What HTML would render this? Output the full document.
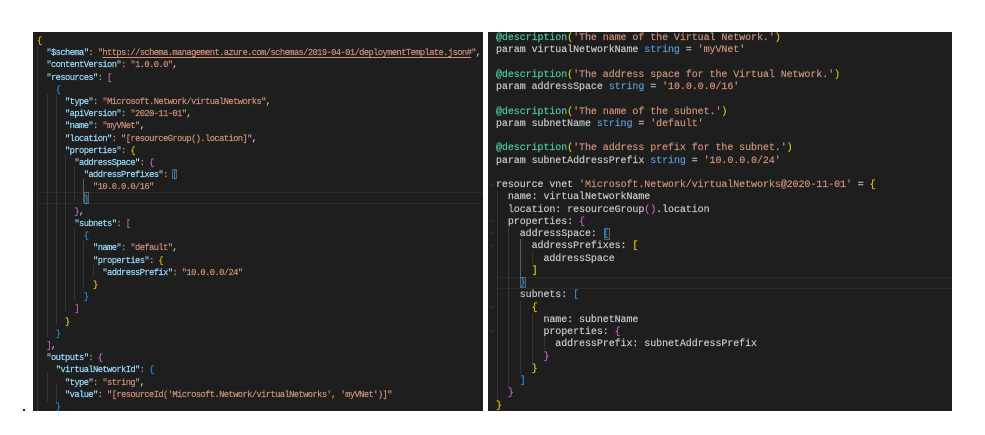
<!DOCTYPE html>
<html>
<head>
<meta charset="utf-8">
<style>
html,body{margin:0;padding:0;background:#fff;width:985px;height:435px;overflow:hidden}
.panel{position:absolute;top:32px;height:379px;background:#1e1e1e;overflow:hidden}
#l{left:33px;width:450px}
#r{left:488px;width:464px}
.code{position:absolute;margin:0;white-space:pre;font-family:"Liberation Mono",monospace;color:#c8c8c8;filter:blur(.35px);-webkit-text-stroke:.18px currentColor}
#l .code{left:4px;top:3px;font-size:8.8px;letter-spacing:-.61px;line-height:12.2px;color:#ce9178}
#r .code{left:8px;top:1px;font-size:10px;letter-spacing:-.07px;line-height:12.25px}
i{font-style:normal}
.k{color:#9cdcfe}.s{color:#ce9178}.p{color:#c8c8c8}
.g{color:#e6c200}.m{color:#d05fc8}.b{color:#1f8fe0}
.t{color:#4ec9a0}.w{color:#569cd6}
.u{text-decoration:underline;text-decoration-color:#ce9178;text-underline-offset:1.5px}
.v{position:absolute;width:1px;background:#343434}
.vb{background:#5c5c5c}
.h{position:absolute;right:0;height:10px;border-top:1px solid #2a2a2a;border-bottom:1px solid #2a2a2a}
.box{position:absolute;border:1px solid #606060;background:rgba(30,70,90,.3)}
.dot{position:absolute;left:23px;top:409px;width:2px;height:2px;background:#222}
.f{position:absolute;left:2px;width:3px;height:3px;border-left:1px solid #2e2e2e;border-bottom:1px solid #2e2e2e;transform:rotate(-45deg)}
</style>
</head>
<body>
<div class="dot"></div>

<div id="l" class="panel">
  <div class="h" style="top:160px;left:4px"></div>
  <div class="v" style="left:4px;top:14px;height:365px"></div>
  <div class="v" style="left:14px;top:62px;height:243px"></div>
  <div class="v" style="left:14px;top:340px;height:30px"></div>
  <div class="v" style="left:23px;top:62px;height:231px"></div>
  <div class="v" style="left:23px;top:352px;height:20px"></div>
  <div class="v" style="left:32px;top:122px;height:157px"></div>
  <div class="v" style="left:41px;top:134px;height:35px"></div>
  <div class="v" style="left:41px;top:196px;height:72px"></div>
  <div class="v vb" style="left:50px;top:147px;height:24px"></div>
  <div class="v" style="left:50px;top:208px;height:48px"></div>
  <div class="v" style="left:60px;top:232px;height:12px"></div>
  <div class="box" style="left:51px;top:160px;width:3px;height:10px"></div>
  <div class="box" style="left:139px;top:137px;width:3px;height:8px"></div>
<pre class="code"><i class="g">{</i>
  <i class="k">"$schema"</i>: "<span class="u">https://schema.management.azure.com/schemas/2019-04-01/deploymentTemplate.json#</span>"<i class="p">,</i>
  <i class="k">"contentVersion"</i>: "1.0.0.0"<i class="p">,</i>
  <i class="k">"resources"</i>: <i class="m">[</i>
    <i class="b">{</i>
      <i class="k">"type"</i>: "Microsoft.Network/virtualNetworks"<i class="p">,</i>
      <i class="k">"apiVersion"</i>: "2020-11-01"<i class="p">,</i>
      <i class="k">"name"</i>: "myVNet"<i class="p">,</i>
      <i class="k">"location"</i>: "[resourceGroup().location]"<i class="p">,</i>
      <i class="k">"properties"</i>: <i class="g">{</i>
        <i class="k">"addressSpace"</i>: <i class="m">{</i>
          <i class="k">"addressPrefixes"</i>: <i class="b">[</i>
            "10.0.0.0/16"
          <i class="b">]</i>
        <i class="m">}</i><i class="p">,</i>
        <i class="k">"subnets"</i>: <i class="m">[</i>
          <i class="b">{</i>
            <i class="k">"name"</i>: "default"<i class="p">,</i>
            <i class="k">"properties"</i>: <i class="g">{</i>
              <i class="k">"addressPrefix"</i>: "10.0.0.0/24"
            <i class="g">}</i>
          <i class="b">}</i>
        <i class="m">]</i>
      <i class="g">}</i>
    <i class="b">}</i>
  <i class="m">]</i><i class="p">,</i>
  <i class="k">"outputs"</i>: <i class="m">{</i>
    <i class="k">"virtualNetworkId"</i>: <i class="b">{</i>
      <i class="k">"type"</i>: "string"<i class="p">,</i>
      <i class="k">"value"</i>: "[resourceId('Microsoft.Network/virtualNetworks', 'myVNet')]"
    <i class="b">}</i></pre>
</div>

<div id="r" class="panel">
  <div class="h" style="top:245px;left:9px"></div>
  <div class="v" style="left:9px;top:159px;height:208px"></div>
  <div class="v" style="left:20px;top:195px;height:160px"></div>
  <div class="v vb" style="left:32px;top:207px;height:49px"></div>
  <div class="v" style="left:32px;top:269px;height:74px"></div>
  <div class="v" style="left:44px;top:220px;height:12px"></div>
  <div class="v" style="left:44px;top:281px;height:50px"></div>
  <div class="v" style="left:56px;top:305px;height:13px"></div>
  <div class="box" style="left:32px;top:245px;width:4px;height:9px"></div>
  <div class="box" style="left:116px;top:196px;width:4px;height:10px"></div>
  <div class="f" style="top:150px"></div>
  <div class="f" style="top:186px"></div>
  <div class="f" style="top:198px"></div>
  <div class="f" style="top:211px"></div>
  <div class="f" style="top:272px"></div>
  <div class="f" style="top:296px"></div>
<pre class="code"><i class="t">@description</i><i class="g">(</i><i class="s">'The name of the Virtual Network.'</i><i class="g">)</i>
param virtualNetworkName <i class="w">string</i> = <i class="s">'myVNet'</i>

<i class="t">@description</i><i class="g">(</i><i class="s">'The address space for the Virtual Network.'</i><i class="g">)</i>
param addressSpace <i class="w">string</i> = <i class="s">'10.0.0.0/16'</i>

<i class="t">@description</i><i class="g">(</i><i class="s">'The name of the subnet.'</i><i class="g">)</i>
param subnetName <i class="w">string</i> = <i class="s">'default'</i>

<i class="t">@description</i><i class="g">(</i><i class="s">'The address prefix for the subnet.'</i><i class="g">)</i>
param subnetAddressPrefix <i class="w">string</i> = <i class="s">'10.0.0.0/24'</i>

resource vnet <i class="s">'Microsoft.Network/virtualNetworks@2020-11-01'</i> = <i class="g">{</i>
  name: virtualNetworkName
  location: resourceGroup<i class="m">()</i>.location
  properties: <i class="m">{</i>
    addressSpace: <i class="b">{</i>
      addressPrefixes: <i class="g">[</i>
        addressSpace
      <i class="g">]</i>
    <i class="b">}</i>
    subnets: <i class="b">[</i>
      <i class="g">{</i>
        name: subnetName
        properties: <i class="m">{</i>
          addressPrefix: subnetAddressPrefix
        <i class="m">}</i>
      <i class="g">}</i>
    <i class="b">]</i>
  <i class="m">}</i>
<i class="g">}</i></pre>
</div>
</body>
</html>
